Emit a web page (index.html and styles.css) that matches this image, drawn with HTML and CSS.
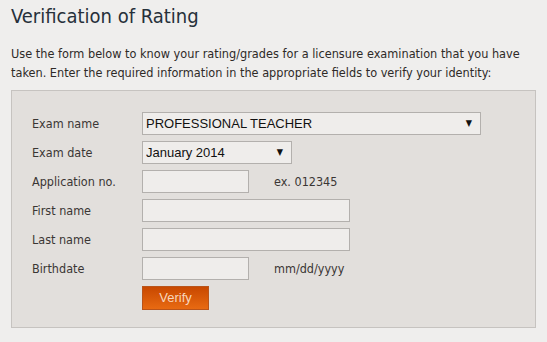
FILE: index.html
```html
<!DOCTYPE html>
<html lang="en">
<head>
    <meta charset="UTF-8">
    <meta name="viewport" content="width=device-width, initial-scale=1.0">
    <title>Verification of Rating</title>
    <link rel="stylesheet" href="styles.css">
</head>
<body>
    <h1 class="title">Verification of Rating</h1>
    <p class="intro">Use the form below to know your rating/grades for a licensure examination that you have taken. Enter the required information in the appropriate fields to verify your identity:</p>
    <form class="panel" onsubmit="return false">
        <label class="label">Exam name</label>
        <div class="field">
            <div class="select wide">
                <select><option>PROFESSIONAL TEACHER</option></select>
                <span class="arrow">&#9660;</span>
            </div>
        </div>
        <label class="label">Exam date</label>
        <div class="field">
            <div class="select short">
                <select><option>January 2014</option></select>
                <span class="arrow">&#9660;</span>
            </div>
        </div>
        <label class="label">Application no.</label>
        <div class="field">
            <input class="text small" type="text">
            <span class="hint">ex. 012345</span>
        </div>
        <label class="label">First name</label>
        <div class="field"><input class="text medium" type="text"></div>
        <label class="label">Last name</label>
        <div class="field"><input class="text medium" type="text"></div>
        <label class="label">Birthdate</label>
        <div class="field">
            <input class="text small" type="text">
            <span class="hint">mm/dd/yyyy</span>
        </div>
        <span></span>
        <div class="field"><button class="verify">Verify</button></div>
    </form>
</body>
</html>
```

FILE: styles.css
```css
body {
    margin: 0;
    padding: 4px 11px 0 11px;
    background: #efeeed;
    color: #3a3634;
    font-family: "DejaVu Sans Condensed", "DejaVu Sans", sans-serif;
}
.title {
    margin: 0;
    font-weight: normal;
    font-size: 20px;
    line-height: 24px;
    color: #26303a;
}
.intro {
    margin: 16px 0 0 0;
    font-size: 12.6px;
    line-height: 19px;
    color: #2e2a28;
}
.panel {
    margin-top: 8px;
    width: 525px;
    box-sizing: border-box;
    background: #e2dfdc;
    border: 1px solid #c6c3c0;
    padding: 21px 0 18px 20px;
    display: grid;
    grid-template-columns: 110px 1fr;
    grid-auto-rows: 23px;
    row-gap: 6px;
    align-items: center;
}
.label {
    font-size: 12.5px;
    color: #3a3634;
}
.field {
    display: flex;
    align-items: center;
    height: 23px;
}
.select {
    position: relative;
    height: 23px;
}
.select select {
    -webkit-appearance: none;
    appearance: none;
    width: 100%;
    height: 100%;
    margin: 0;
    padding: 0 0 0 3px;
    border: 1px solid #b3b0ad;
    border-radius: 0;
    background: #efedeb;
    font-family: "Liberation Sans", Arial, sans-serif;
    font-size: 13px;
    color: #111;
}
.select .arrow {
    position: absolute;
    right: 9px;
    top: 6px;
    font-size: 9px;
    color: #111;
    pointer-events: none;
}
.wide { width: 339px; }
.short { width: 150px; }
.text {
    height: 23px;
    box-sizing: border-box;
    margin: 0;
    border: 1px solid #b3b0ad;
    background: #efedeb;
}
.small { width: 107px; }
.medium { width: 208px; }
.hint {
    margin-left: 25px;
    font-size: 12.5px;
    color: #3a3634;
}
.verify {
    width: 67px;
    height: 24px;
    border: 1px solid #b9541a;
    background: linear-gradient(#c84800, #e86a12);
    color: #f7d6bc;
    font-family: "Liberation Sans", Arial, sans-serif;
    font-size: 13px;
    padding: 0;
    cursor: pointer;
}
```
